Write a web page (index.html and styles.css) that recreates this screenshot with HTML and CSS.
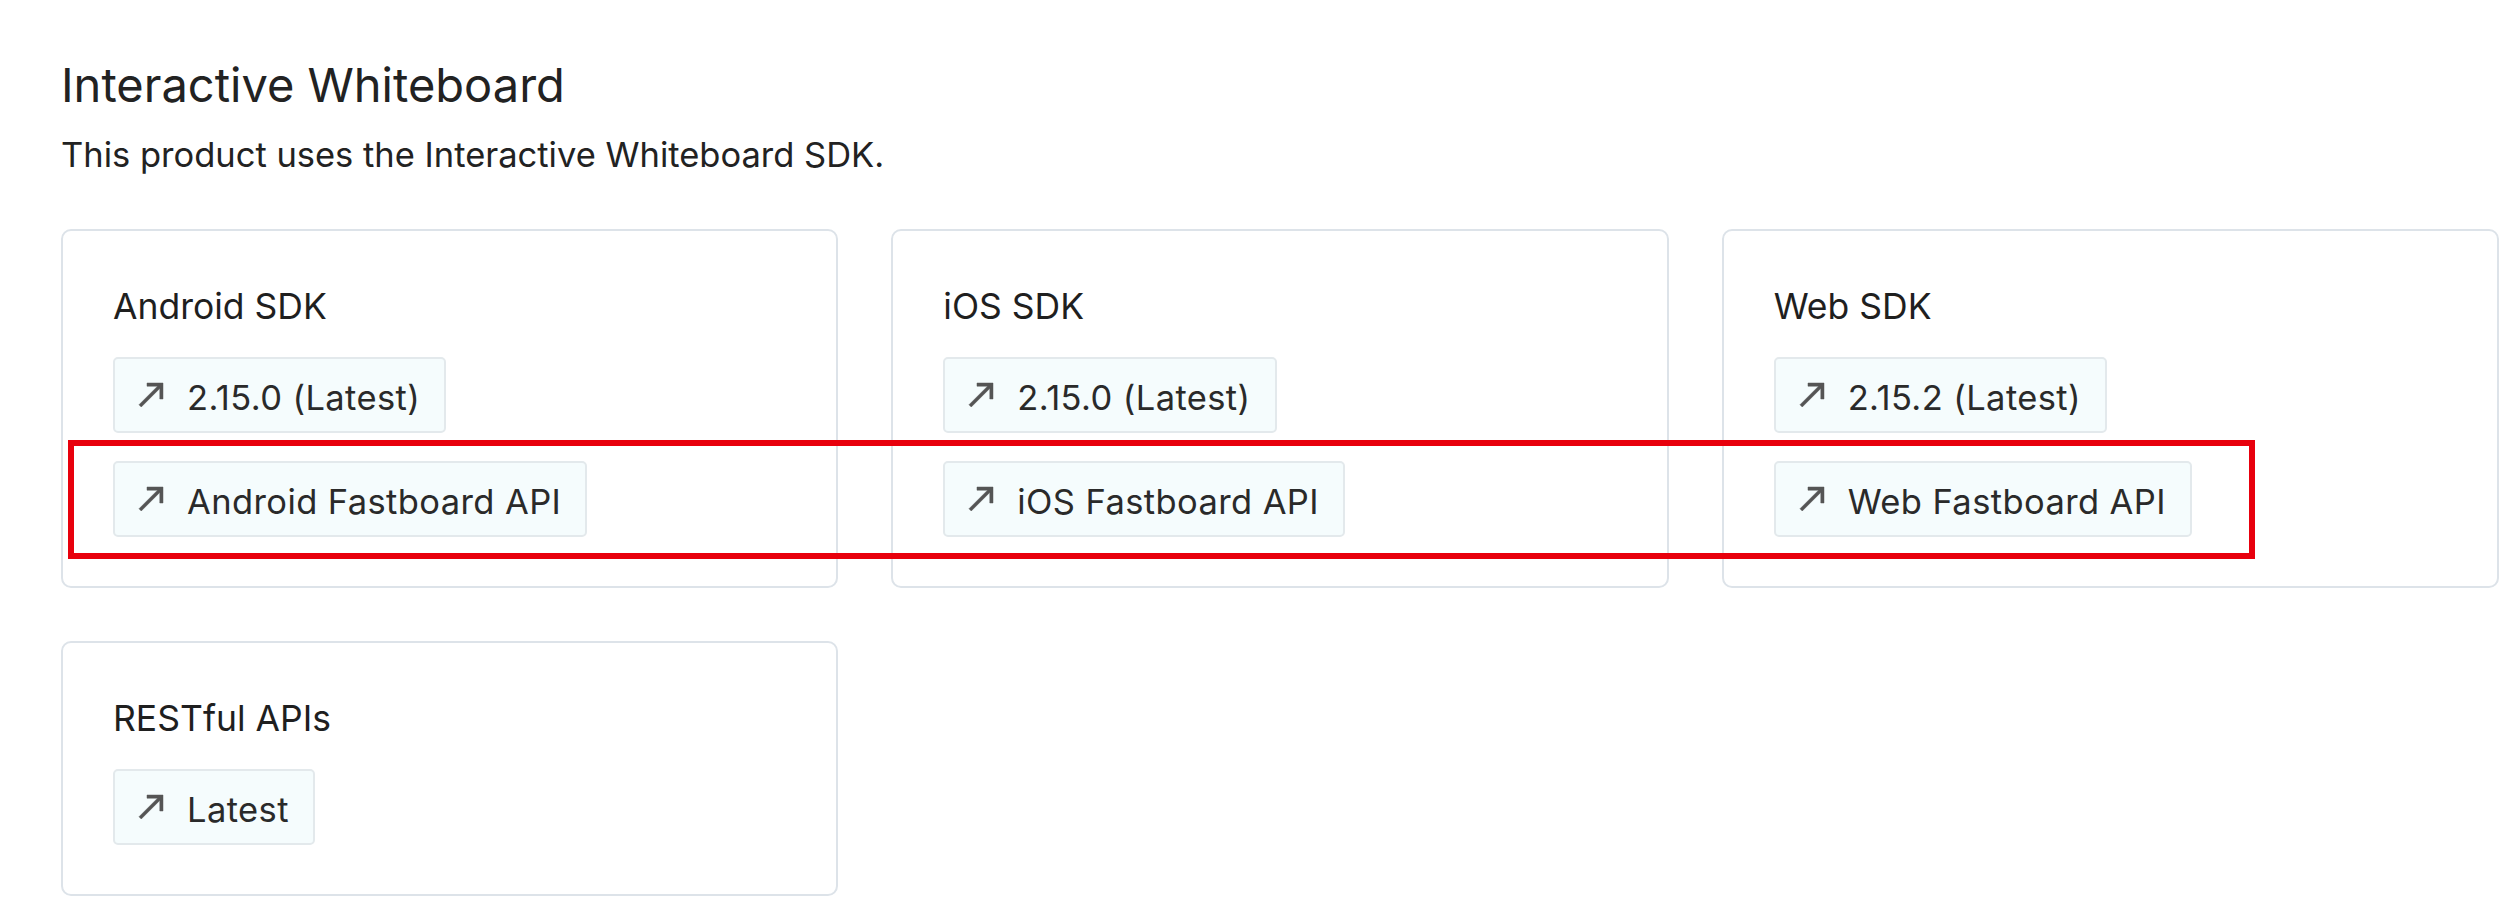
FILE: index.html
```html
<!DOCTYPE html>
<html lang="en">
<head>
    <meta charset="UTF-8">
    <meta name="viewport" content="width=device-width, initial-scale=1.0">
    <title>Interactive Whiteboard</title>
    <link rel="stylesheet" href="styles.css">
</head>
<body>
    <!-- Header -->
    <h1 class="page-title">Interactive Whiteboard</h1>
    <p class="page-desc">This product uses the Interactive Whiteboard SDK.</p>

    <!-- SDK cards -->
    <div class="sdk-grid">
        <div class="sdk-card">
            <h2>Android SDK</h2>
            <div class="link-list">
                <a class="doc-link" href="#">
                    <svg class="arrow" viewBox="4 5 15 15"><path d="M9 5v2h6.59L4 18.59 5.41 20 17 8.41V15h2V5H9z"/></svg>
                    <span>2.15.0 (Latest)</span>
                </a>
                <a class="doc-link" href="#">
                    <svg class="arrow" viewBox="4 5 15 15"><path d="M9 5v2h6.59L4 18.59 5.41 20 17 8.41V15h2V5H9z"/></svg>
                    <span>Android Fastboard API</span>
                </a>
            </div>
        </div>
        <div class="sdk-card">
            <h2>iOS SDK</h2>
            <div class="link-list">
                <a class="doc-link" href="#">
                    <svg class="arrow" viewBox="4 5 15 15"><path d="M9 5v2h6.59L4 18.59 5.41 20 17 8.41V15h2V5H9z"/></svg>
                    <span>2.15.0 (Latest)</span>
                </a>
                <a class="doc-link" href="#">
                    <svg class="arrow" viewBox="4 5 15 15"><path d="M9 5v2h6.59L4 18.59 5.41 20 17 8.41V15h2V5H9z"/></svg>
                    <span>iOS Fastboard API</span>
                </a>
            </div>
        </div>
        <div class="sdk-card">
            <h2>Web SDK</h2>
            <div class="link-list">
                <a class="doc-link" href="#">
                    <svg class="arrow" viewBox="4 5 15 15"><path d="M9 5v2h6.59L4 18.59 5.41 20 17 8.41V15h2V5H9z"/></svg>
                    <span>2.15.2 (Latest)</span>
                </a>
                <a class="doc-link" href="#">
                    <svg class="arrow" viewBox="4 5 15 15"><path d="M9 5v2h6.59L4 18.59 5.41 20 17 8.41V15h2V5H9z"/></svg>
                    <span>Web Fastboard API</span>
                </a>
            </div>
        </div>
        <div class="sdk-card">
            <h2>RESTful APIs</h2>
            <div class="link-list">
                <a class="doc-link" href="#">
                    <svg class="arrow" viewBox="4 5 15 15"><path d="M9 5v2h6.59L4 18.59 5.41 20 17 8.41V15h2V5H9z"/></svg>
                    <span>Latest</span>
                </a>
            </div>
        </div>
    </div>

    <!-- red highlight drawn over the Fastboard row -->
    <div class="highlight"></div>
</body>
</html>
```

FILE: styles.css
```css
* {
    margin: 0;
    padding: 0;
    box-sizing: border-box;
}
body {
    position: relative;
    background: #fff;
    color: #222;
    font-family: Inter, "Noto Sans", sans-serif;
    padding: 57px 5px 0 61px;
}
/* Header */
.page-title {
    font-size: 47px;
    font-weight: 400;
    line-height: 1.2;
    color: #222;
}
.page-desc {
    font-size: 34.5px;
    line-height: 51px;
    margin-top: 16px;
    color: #222;
}
/* Cards */
.sdk-grid {
    display: grid;
    grid-template-columns: repeat(3, 1fr);
    gap: 53px;
    margin-top: 49px;
    align-items: start;
}
.sdk-card {
    border: 2px solid #dde3e9;
    border-radius: 10px;
    padding: 49px 50px;
}
.sdk-card h2 {
    font-size: 35.5px;
    font-weight: 400;
    line-height: 54px;
    color: #1f1f1f;
    margin-bottom: 23px;
}
.link-list {
    display: flex;
    flex-direction: column;
    align-items: flex-start;
    gap: 28px;
}
.doc-link {
    display: inline-flex;
    align-items: center;
    gap: 24px;
    height: 76px;
    padding: 0 24px;
    background: #f5fcfd;
    border: 2px solid #e3e9ec;
    border-radius: 5px;
    font-size: 34.5px;
    letter-spacing: 0.4px;
    color: #2a2a2a;
    text-decoration: none;
}
.doc-link span {
    padding-top: 4px;
}
.arrow {
    width: 24px;
    height: 24px;
    fill: #555;
    stroke: #555;
    stroke-width: 0.3;
    flex-shrink: 0;
    overflow: visible;
}
/* Annotation box */
.highlight {
    position: absolute;
    left: 68px;
    top: 440px;
    width: 2187px;
    height: 119px;
    border: 6px solid #e8000d;
}
```
